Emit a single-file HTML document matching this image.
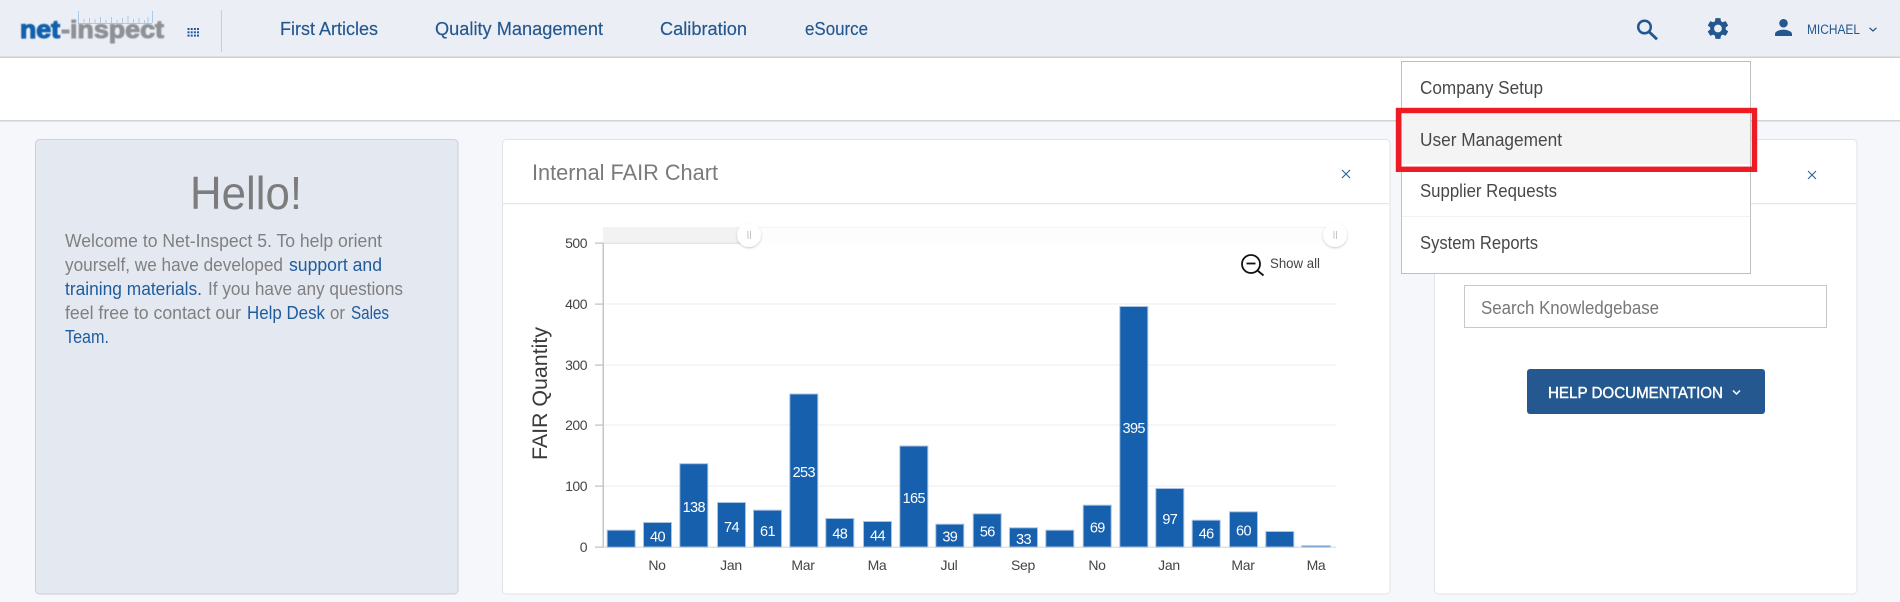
<!DOCTYPE html>
<html lang="en">
<head>
<meta charset="utf-8">
<title>Net-Inspect</title>
<style>
html,body{margin:0;padding:0;width:1900px;height:602px;overflow:hidden;background:#f5f7fb}
svg{display:block;position:absolute;left:0;top:0}
text{font-family:"Liberation Sans",sans-serif}
.nav{font-size:18.5px;fill:#23578f;stroke:#23578f;stroke-width:.15}
.p{font-size:18.5px;fill:#808080}
.a{font-size:18.5px;fill:#1f5c9e}
.m{font-size:18.5px;fill:#484848}
.y{font-size:14px;fill:#444;text-anchor:end;letter-spacing:-.5px}
.x{font-size:14px;fill:#444;text-anchor:middle;letter-spacing:-.3px}
.v{font-size:14.5px;fill:#fff;text-anchor:middle;letter-spacing:-.6px}
.bars rect{fill:#1660ad;stroke:#a9c3e2;stroke-width:1}
</style>
</head>
<body>
<svg width="1900" height="602" viewBox="0 0 1900 602" xmlns="http://www.w3.org/2000/svg">
<!-- backgrounds -->
<rect width="1900" height="602" fill="#f5f7fb"/>
<rect width="1900" height="57" fill="#ebeef4"/>
<rect y="57" width="1900" height="63" fill="#fff"/>
<rect y="56.500" width="1900" height="1.500" fill="#cfd0d2"/>
<rect y="120" width="1900" height="1.500" fill="#d2d3d5"/>

<!-- logo -->
<g stroke="#a9cbe8" stroke-width="1" fill="none">
<path d="M78.500 11V23M84 19V23M89.500 18V23M95 19V23M100.500 17V23M106 20V23M111.500 17V23M117 20V23M122.500 18V23M128 16V23M133.500 19V23M139 18V23M144.500 20V23M148 17V23M152.500 11V23M78 23.500H152"/>
</g>
<g style="filter:blur(.45px)">
<text x="20" y="38" font-size="25" font-weight="700" fill="#1060ab" stroke="#1060ab" stroke-width="1.200" textLength="40" lengthAdjust="spacingAndGlyphs">net</text>
<text x="61" y="38" font-size="25" font-weight="700" fill="#8e9196" stroke="#8e9196" stroke-width="1" textLength="103" lengthAdjust="spacingAndGlyphs">-inspect</text>
</g>
<g fill="#1f5b9c">
<rect x="187.500" y="28" width="2" height="2"/><rect x="190.700" y="28" width="2" height="2"/><rect x="193.900" y="28" width="2" height="2"/><rect x="197" y="28" width="2" height="2"/>
<rect x="187.500" y="31.300" width="2" height="2"/><rect x="190.700" y="31.300" width="2" height="2"/><rect x="193.900" y="31.300" width="2" height="2"/><rect x="197" y="31.300" width="2" height="2"/>
<rect x="187.500" y="34.600" width="2" height="2"/><rect x="190.700" y="34.600" width="2" height="2"/><rect x="193.900" y="34.600" width="2" height="2"/><rect x="197" y="34.600" width="2" height="2"/>
</g>
<rect x="221" y="10" width="1" height="42" fill="#c9cdd3"/>

<!-- nav -->
<text class="nav" x="280" y="35" textLength="98" lengthAdjust="spacingAndGlyphs">First Articles</text>
<text class="nav" x="435" y="35" textLength="168" lengthAdjust="spacingAndGlyphs">Quality Management</text>
<text class="nav" x="660" y="35" textLength="87" lengthAdjust="spacingAndGlyphs">Calibration</text>
<text class="nav" x="805" y="35" textLength="63" lengthAdjust="spacingAndGlyphs">eSource</text>

<!-- right icons -->
<circle cx="1644.500" cy="27" r="6.300" fill="none" stroke="#23578f" stroke-width="2.500"/>
<path d="M1649.300 32 L1657 39.300" fill="none" stroke="#23578f" stroke-width="2.800"/>
<g transform="translate(1705 15.500) scale(1.08)" fill="#23578f"><path d="M19.140 12.940c.04-.3.06-.61.06-.94 0-.32-.02-.64-.07-.94l2.030-1.580c.18-.14.23-.41.12-.61l-1.920-3.320c-.12-.22-.37-.29-.59-.22l-2.390.96c-.5-.38-1.030-.7-1.620-.94l-.36-2.540c-.04-.24-.24-.41-.48-.41h-3.840c-.24 0-.43.17-.47.41l-.36 2.540c-.59.24-1.130.57-1.620.94l-2.390-.96c-.22-.08-.47 0-.59.22L2.740 8.870c-.12.21-.08.47.12.61l2.030 1.580c-.05.3-.09.63-.09.94s.02.64.07.94l-2.030 1.580c-.18.14-.23.41-.12.61l1.920 3.320c.12.22.37.29.59.22l2.390-.96c.5.38 1.030.7 1.620.94l.36 2.540c.05.24.24.41.48.41h3.840c.24 0 .44-.17.47-.41l.36-2.540c.59-.24 1.130-.56 1.620-.94l2.390.96c.22.08.47 0 .59-.22l1.920-3.320c.12-.22.07-.47-.12-.61l-2.010-1.580zM12 15.600c-1.980 0-3.600-1.620-3.600-3.600s1.620-3.600 3.600-3.600 3.600 1.620 3.600 3.600-1.620 3.600-3.600 3.600z"/></g>
<g transform="translate(1770.800 14.800) scale(1.06)" fill="#23578f"><path d="M12 12c2.210 0 4-1.790 4-4s-1.790-4-4-4-4 1.790-4 4 1.790 4 4 4zm0 2c-2.670 0-8 1.340-8 4v2h16v-2c0-2.660-5.330-4-8-4z"/></g>
<text x="1807" y="34" font-size="13.500" fill="#23578f" textLength="53" lengthAdjust="spacingAndGlyphs">MICHAEL</text>
<path d="M1869.500 27.800 L1873 31 L1876.500 27.800" fill="none" stroke="#23578f" stroke-width="1.300"/>

<!-- hello card -->
<rect x="35.500" y="139.500" width="422.500" height="454.500" rx="4" fill="#e4e8f1" stroke="#c9d0db"/>
<text x="190" y="209" font-size="46" fill="#7c7c7c" textLength="112" lengthAdjust="spacingAndGlyphs">Hello!</text>
<text class="p" x="65" y="247" textLength="317" lengthAdjust="spacingAndGlyphs">Welcome to Net-Inspect 5. To help orient</text>
<text class="p" x="65" y="271" textLength="218" lengthAdjust="spacingAndGlyphs">yourself, we have developed</text>
<text class="a" x="289" y="271" textLength="93" lengthAdjust="spacingAndGlyphs">support and</text>
<text class="a" x="65" y="295" textLength="137" lengthAdjust="spacingAndGlyphs">training materials.</text>
<text class="p" x="208" y="295" textLength="195" lengthAdjust="spacingAndGlyphs">If you have any questions</text>
<text class="p" x="65" y="319" textLength="176" lengthAdjust="spacingAndGlyphs">feel free to contact our</text>
<text class="a" x="247" y="319" textLength="78" lengthAdjust="spacingAndGlyphs">Help Desk</text>
<text class="p" x="330" y="319" textLength="15" lengthAdjust="spacingAndGlyphs">or</text>
<text class="a" x="351" y="319" textLength="38" lengthAdjust="spacingAndGlyphs">Sales</text>
<text class="a" x="65" y="343" textLength="44" lengthAdjust="spacingAndGlyphs">Team.</text>

<!-- chart card -->
<rect x="502.500" y="139.500" width="887.500" height="454.500" rx="4" fill="#fff" stroke="#dfe3ea"/>
<rect x="503" y="203" width="886" height="1.200" fill="#e2e6ec"/>
<text x="532" y="180" font-size="22" fill="#7a7a7a" textLength="186" lengthAdjust="spacingAndGlyphs">Internal FAIR Chart</text>
<path d="M1342 170 L1350 178 M1350 170 L1342 178" stroke="#2b6296" stroke-width="1.100" fill="none"/>

<!-- chart grid -->
<rect x="603" y="227" width="733" height="16" fill="#fdfdfd"/>
<rect x="603" y="227" width="733" height="1" fill="#f3f3f3"/>
<rect x="603" y="227" width="146" height="16" fill="#f2f2f2"/>
<rect x="603" y="242.500" width="146" height="1.500" fill="#e6e6e6"/>
<g fill="#f3f3f3">
<rect x="603" y="303.300" width="733" height="1.500"/>
<rect x="603" y="364.200" width="733" height="1.500"/>
<rect x="603" y="424.200" width="733" height="1.500"/>
<rect x="603" y="485.400" width="733" height="1.500"/>
</g>
<rect x="603" y="546.500" width="733" height="1.500" fill="#e3e3e3"/>
<g fill="#bfbfbf">
<rect x="595" y="242.500" width="8" height="1.200"/>
<rect x="595" y="303.500" width="8" height="1.200"/>
<rect x="595" y="364.500" width="8" height="1.200"/>
<rect x="595" y="424.500" width="8" height="1.200"/>
<rect x="595" y="485.500" width="8" height="1.200"/>
<rect x="595" y="546.500" width="8" height="1.200"/>
</g>
<rect x="602.500" y="243" width="1.500" height="304" fill="#c6c6c6"/>

<text class="y" x="587" y="248">500</text>
<text class="y" x="587" y="309">400</text>
<text class="y" x="587" y="370">300</text>
<text class="y" x="587" y="430">200</text>
<text class="y" x="587" y="491">100</text>
<text class="y" x="587" y="552">0</text>
<text transform="translate(547 460) rotate(-90)" font-size="21" fill="#3a3a3a" textLength="133" lengthAdjust="spacingAndGlyphs">FAIR Quantity</text>

<!-- slider handles -->
<defs><filter id="s" x="-30%" y="-30%" width="160%" height="170%"><feDropShadow dx="0" dy="1" stdDeviation="1" flood-color="#000" flood-opacity=".22"/></filter></defs>
<circle cx="749" cy="235" r="12" fill="#fff" filter="url(#s)"/>
<path d="M748 231V239M750.500 231V239" stroke="#c4c4c4" stroke-width="1"/>
<circle cx="1335" cy="235" r="12" fill="#fff" filter="url(#s)"/>
<path d="M1334 231V239M1336.500 231V239" stroke="#c4c4c4" stroke-width="1"/>

<!-- show all -->
<circle cx="1251" cy="264" r="9" fill="none" stroke="#111" stroke-width="1.800"/>
<path d="M1246.500 263.500H1255.500" stroke="#111" stroke-width="1.800"/>
<path d="M1257.500 270.500 L1263.500 275.500" stroke="#111" stroke-width="1.800"/>
<text x="1270" y="268" font-size="14" fill="#444" textLength="50" lengthAdjust="spacingAndGlyphs">Show all</text>

<!-- bars -->
<g class="bars">
<rect x="607.200" y="530.200" width="28" height="17"/>
<rect x="643.500" y="522.500" width="28" height="24.500"/>
<rect x="679.800" y="463.700" width="28" height="83.300"/>
<rect x="717.500" y="502.500" width="28" height="44.500"/>
<rect x="753.500" y="510.200" width="28" height="36.800"/>
<rect x="789.800" y="394" width="28" height="153"/>
<rect x="825.800" y="518.500" width="28" height="28.500"/>
<rect x="863.500" y="521.500" width="28" height="25.500"/>
<rect x="899.800" y="446" width="28" height="101"/>
<rect x="935.800" y="524.200" width="28" height="22.800"/>
<rect x="973.200" y="513.800" width="28" height="33.200"/>
<rect x="1009.500" y="527.800" width="28" height="19.200"/>
<rect x="1045.800" y="530.200" width="28" height="16.800"/>
<rect x="1083.200" y="505.200" width="28" height="41.800"/>
<rect x="1119.800" y="306.500" width="28" height="240.500"/>
<rect x="1155.800" y="488.500" width="28" height="58.500"/>
<rect x="1192.200" y="520.200" width="28" height="26.800"/>
<rect x="1229.500" y="511.800" width="28" height="35.200"/>
<rect x="1265.800" y="531.500" width="28" height="15.500"/>
<rect x="1301.800" y="545.700" width="28.500" height="1.300"/>
</g>
<text class="v" x="657.500" y="541.700">40</text>
<text class="v" x="693.800" y="512">138</text>
<text class="v" x="731.500" y="532">74</text>
<text class="v" x="767.500" y="536">61</text>
<text class="v" x="803.800" y="477">253</text>
<text class="v" x="839.800" y="538.700">48</text>
<text class="v" x="877.500" y="540.700">44</text>
<text class="v" x="913.800" y="503">165</text>
<text class="v" x="949.800" y="541.700">39</text>
<text class="v" x="987.300" y="536.700">56</text>
<text class="v" x="1023.500" y="544">33</text>
<text class="v" x="1097.300" y="532.700">69</text>
<text class="v" x="1133.700" y="433">395</text>
<text class="v" x="1169.800" y="524">97</text>
<text class="v" x="1206.200" y="538.700">46</text>
<text class="v" x="1243.500" y="535.700">60</text>

<text class="x" x="657" y="570">No</text>
<text class="x" x="731" y="570">Jan</text>
<text class="x" x="803" y="570">Mar</text>
<text class="x" x="877" y="570">Ma</text>
<text class="x" x="949" y="570">Jul</text>
<text class="x" x="1023" y="570">Sep</text>
<text class="x" x="1097" y="570">No</text>
<text class="x" x="1169" y="570">Jan</text>
<text class="x" x="1243" y="570">Mar</text>
<text class="x" x="1316" y="570">Ma</text>

<!-- right card -->
<rect x="1434.500" y="139.500" width="422.500" height="454.500" rx="4" fill="#fff" stroke="#dfe3ea"/>
<rect x="1435" y="203" width="421" height="1.200" fill="#e2e6ec"/>
<path d="M1808 171 L1816 179 M1816 171 L1808 179" stroke="#2b6296" stroke-width="1.100" fill="none"/>
<rect x="1464.500" y="285.500" width="362" height="42" fill="#fff" stroke="#c8c8c8" stroke-width="1"/>
<text x="1481" y="314" font-size="18.500" fill="#777" textLength="178" lengthAdjust="spacingAndGlyphs">Search Knowledgebase</text>
<rect x="1527" y="369" width="238" height="45" rx="3" fill="#24588f"/>
<text x="1548" y="398" font-size="15.500" fill="#fff" stroke="#fff" stroke-width=".4" textLength="175" lengthAdjust="spacingAndGlyphs">HELP DOCUMENTATION</text>
<path d="M1733 390.500 L1736.500 394 L1740 390.500" fill="none" stroke="#fff" stroke-width="1.500"/>

<!-- dropdown -->
<rect x="1401.500" y="61.500" width="349" height="212" fill="#fff" stroke="#bfbfbf" stroke-width="1"/>
<rect x="1402" y="113" width="348" height="51" fill="#f4f4f4"/>
<rect x="1402" y="216" width="348" height="1" fill="#f2f2f2"/>
<text class="m" x="1420" y="94" textLength="123" lengthAdjust="spacingAndGlyphs">Company Setup</text>
<text class="m" x="1420" y="146" textLength="142" lengthAdjust="spacingAndGlyphs">User Management</text>
<text class="m" x="1420" y="197" textLength="137" lengthAdjust="spacingAndGlyphs">Supplier Requests</text>
<text class="m" x="1420" y="249" textLength="118" lengthAdjust="spacingAndGlyphs">System Reports</text>
<rect x="1398.500" y="110.500" width="356" height="58.800" fill="none" stroke="#ed1c24" stroke-width="5.400"/>
</svg>
</body>
</html>
